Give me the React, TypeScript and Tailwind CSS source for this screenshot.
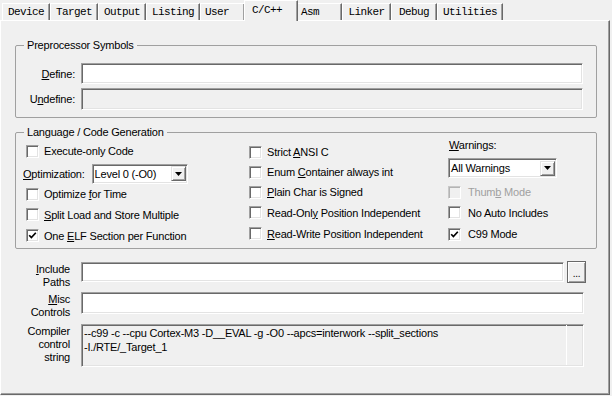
import React from "react";

interface TabDef {
  label: string;
  cls: string;
}

const tabs: TabDef[] = [
  { label: "Device", cls: "w-[48px] justify-center" },
  { label: "Target", cls: "w-[48px] justify-center" },
  { label: "Output", cls: "w-[48px] justify-center" },
  { label: "Listing", cls: "w-[54px] justify-center" },
  { label: "User", cls: "w-[45px] pl-[4px]" },
  { label: "C/C++", cls: "" },
  { label: "Asm", cls: "w-[45px] pl-[3px]" },
  { label: "Linker", cls: "w-[49px] justify-center" },
  { label: "Debug", cls: "w-[46px] justify-center" },
  { label: "Utilities", cls: "w-[66px] justify-center" },
];

const sunken =
  "border border-t-[#a0a0a0] border-l-[#a0a0a0] border-r-white border-b-white shadow-[inset_1px_1px_0_#696969,inset_-1px_-1px_0_#e3e3e3]";

const raised =
  "border border-t-[#e3e3e3] border-l-[#e3e3e3] border-r-[#696969] border-b-[#696969] shadow-[inset_1px_1px_0_#fff,inset_-1px_-1px_0_#a0a0a0]";

const CheckBox: React.FC<{ checked?: boolean; disabled?: boolean }> = ({ checked, disabled }) => (
  <span
    className={`w-[13px] h-[13px] shrink-0 flex items-center justify-center ${
      disabled
        ? "border border-t-[#c8c8c8] border-l-[#c8c8c8] border-r-white border-b-white shadow-[inset_1px_1px_0_#b4b4b4] bg-[#f0f0f0]"
        : `${sunken} bg-white`
    }`}
  >
    {checked && (
      <svg width="9" height="9" viewBox="0 0 9 9">
        <path d="M1.2 4.2 L3.4 6.6 L7.8 1.8" fill="none" stroke="#000" strokeWidth="1.7" />
      </svg>
    )}
  </span>
);

const Row: React.FC<{ children: React.ReactNode; checked?: boolean; disabled?: boolean; gap?: string; h?: string }> = ({
  children,
  checked,
  disabled,
  gap = "gap-[5px]",
  h = "h-[20px]",
}) => (
  <div className={`flex items-center ${gap} ${h}`}>
    <CheckBox checked={checked} disabled={disabled} />
    <span className={`whitespace-nowrap ${disabled ? "text-[#a0a0a0]" : ""}`}>{children}</span>
  </div>
);

const Combo: React.FC<{ value: string; cls: string }> = ({ value, cls }) => (
  <div className={`flex items-center bg-white ${sunken} ${cls}`}>
    <span className="flex-1 pl-[2px] whitespace-nowrap">{value}</span>
    <span className={`w-[15px] h-[15px] mr-[1px] flex items-center justify-center bg-[#f0f0f0] ${raised}`}>
      <svg width="7" height="4" viewBox="0 0 7 4">
        <path d="M0 0 H7 L3.5 4 Z" fill="#000" />
      </svg>
    </span>
  </div>
);

export default function App() {
  return (
    <div className="w-[612px] h-[396px] bg-[#f0f0f0] overflow-hidden text-[11px] leading-[14px] tracking-[-0.2px] text-black font-['Liberation_Sans',Arial,sans-serif]">
      {/* Tab strip */}
      <div className="flex items-end h-[20px] pl-[2px] font-['Liberation_Mono',monospace] text-[11px] tracking-[-0.6px]">
        {tabs.map((t) =>
          t.label === "C/C++" ? (
            <div
              key={t.label}
              className="relative z-10 -mb-px w-[54px] h-[21px] pl-[7px] pt-[2px] flex items-start bg-[#f0f0f0] border-l border-l-white border-t border-t-white border-r border-r-[#696969] shadow-[inset_-1px_0_0_#a0a0a0] -mx-px"
            >
              {t.label}
            </div>
          ) : (
            <div
              key={t.label}
              className={`h-[17px] flex items-center border-l border-l-white border-t border-t-white border-r border-r-[#696969] shadow-[inset_-1px_0_0_#a0a0a0] ${t.cls}`}
            >
              {t.label}
            </div>
          ),
        )}
      </div>

      {/* Page body */}
      <div className="w-[610px] h-[375px] pl-[14px] border-t border-t-white border-l border-l-white border-r border-r-[#696969] border-b border-b-[#696969] shadow-[inset_-1px_-1px_0_#a0a0a0]">
        {/* Preprocessor Symbols */}
        <fieldset className="mt-[17px] w-[582px] border border-[#a0a0a0] rounded-[2px] pt-[11px] pb-[7px]">
          <legend className="ml-[8px] px-[3px] leading-[14px]">Preprocessor Symbols</legend>
          <div className="flex items-center h-[21px]">
            <span className="w-[59px] text-right">
              <u>D</u>efine:
            </span>
            <div className={`ml-[6px] w-[502px] h-[21px] bg-white ${sunken}`} />
          </div>
          <div className="flex items-center h-[22px] mt-[4px]">
            <span className="w-[59px] text-right">
              U<u>n</u>define:
            </span>
            <div className={`ml-[6px] w-[502px] h-[22px] bg-[#f0f0f0] ${sunken}`} />
          </div>
        </fieldset>

        {/* Language / Code Generation */}
        <fieldset className="mt-[7px] w-[582px] border border-[#a0a0a0] rounded-[2px] pb-[2px]">
          <legend className="ml-[8px] px-[3px] leading-[14px]">Language / Code Generation</legend>
          <div className="flex items-start">
            <div className="w-[233px] pl-[10px] pt-[2px] flex flex-col">
              <Row>Execute-only Code</Row>
              <div className="flex items-center h-[21px] mt-[2px] -ml-[3px]">
                <span className="whitespace-nowrap">
                  <u>O</u>ptimization:
                </span>
                <Combo value="Level 0 (-O0)" cls="ml-[7px] w-[96px] h-[20px]" />
              </div>
              <Row>
                Optimize <u>f</u>or Time
              </Row>
              <Row h="h-[21px]">
                <u>S</u>plit Load and Store Multiple
              </Row>
              <Row checked h="h-[21px]">
                One <u>E</u>LF Section per Function
              </Row>
            </div>

            <div className="w-[199px] pt-[3px] flex flex-col">
              <Row>
                Strict <u>A</u>NSI C
              </Row>
              <Row>
                Enum <u>C</u>ontainer always int
              </Row>
              <Row>
                <u>P</u>lain Char is Signed
              </Row>
              <Row h="h-[21px]">
                Read-Onl<u>y</u> Position Independent
              </Row>
              <Row h="h-[21px]">
                <u>R</u>ead-Write Position Independent
              </Row>
            </div>

            <div className="flex flex-col">
              <span className="leading-[13px] pl-[1px]">
                <u>W</u>arnings:
              </span>
              <Combo value="All Warnings" cls="mt-[6px] w-[109px] h-[20px]" />
              <div className="mt-[4px]">
                <Row disabled gap="gap-[7px]">
                  Thum<u>b</u> Mode
                </Row>
                <Row gap="gap-[7px]" h="h-[21px]">
                  No Auto Includes
                </Row>
                <Row checked gap="gap-[7px]" h="h-[22px]">
                  C99 Mode
                </Row>
              </div>
            </div>
          </div>
        </fieldset>

        {/* Include / Misc / Compiler string */}
        <div className="mt-[13px] flex flex-col">
          <div className="flex items-start h-[30px]">
            <div className="w-[55px] text-right leading-[13px] pt-[1px]">
              <u>I</u>nclude
              <br />
              Paths
            </div>
            <div className={`ml-[11px] w-[483px] h-[20px] bg-white ${sunken}`} />
            <div className="ml-[3px] -mt-px w-[19px] h-[22px] bg-[#f0f0f0] flex items-end justify-center pb-[3px] text-[10px] leading-[10px] border border-[#696969] shadow-[inset_1px_1px_0_#fff,inset_-1px_-1px_0_#a0a0a0]">
              ...
            </div>
          </div>
          <div className="flex items-start h-[32px]">
            <div className="w-[55px] text-right leading-[13px] pt-[1px]">
              <u>M</u>isc
              <br />
              Controls
            </div>
            <div className={`ml-[11px] w-[503px] h-[22px] bg-white ${sunken}`} />
          </div>
          <div className="flex items-start h-[43px]">
            <div className="w-[55px] text-right leading-[13px] pt-[1px]">
              Compiler
              <br />
              control
              <br />
              string
            </div>
            <div className={`ml-[11px] w-[503px] h-[43px] flex bg-[#f0f0f0] ${sunken}`}>
              <div className="flex-1 pl-[2px] pt-[1px] leading-[14px] whitespace-nowrap overflow-hidden">
                --c99 -c --cpu Cortex-M3 -D__EVAL -g -O0 --apcs=interwork --split_sections
                <br />
                -I./RTE/_Target_1
              </div>
              <div className="w-[17px] border-l border-l-white mb-[1px]" />
            </div>
          </div>
        </div>
      </div>
    </div>
  );
}
